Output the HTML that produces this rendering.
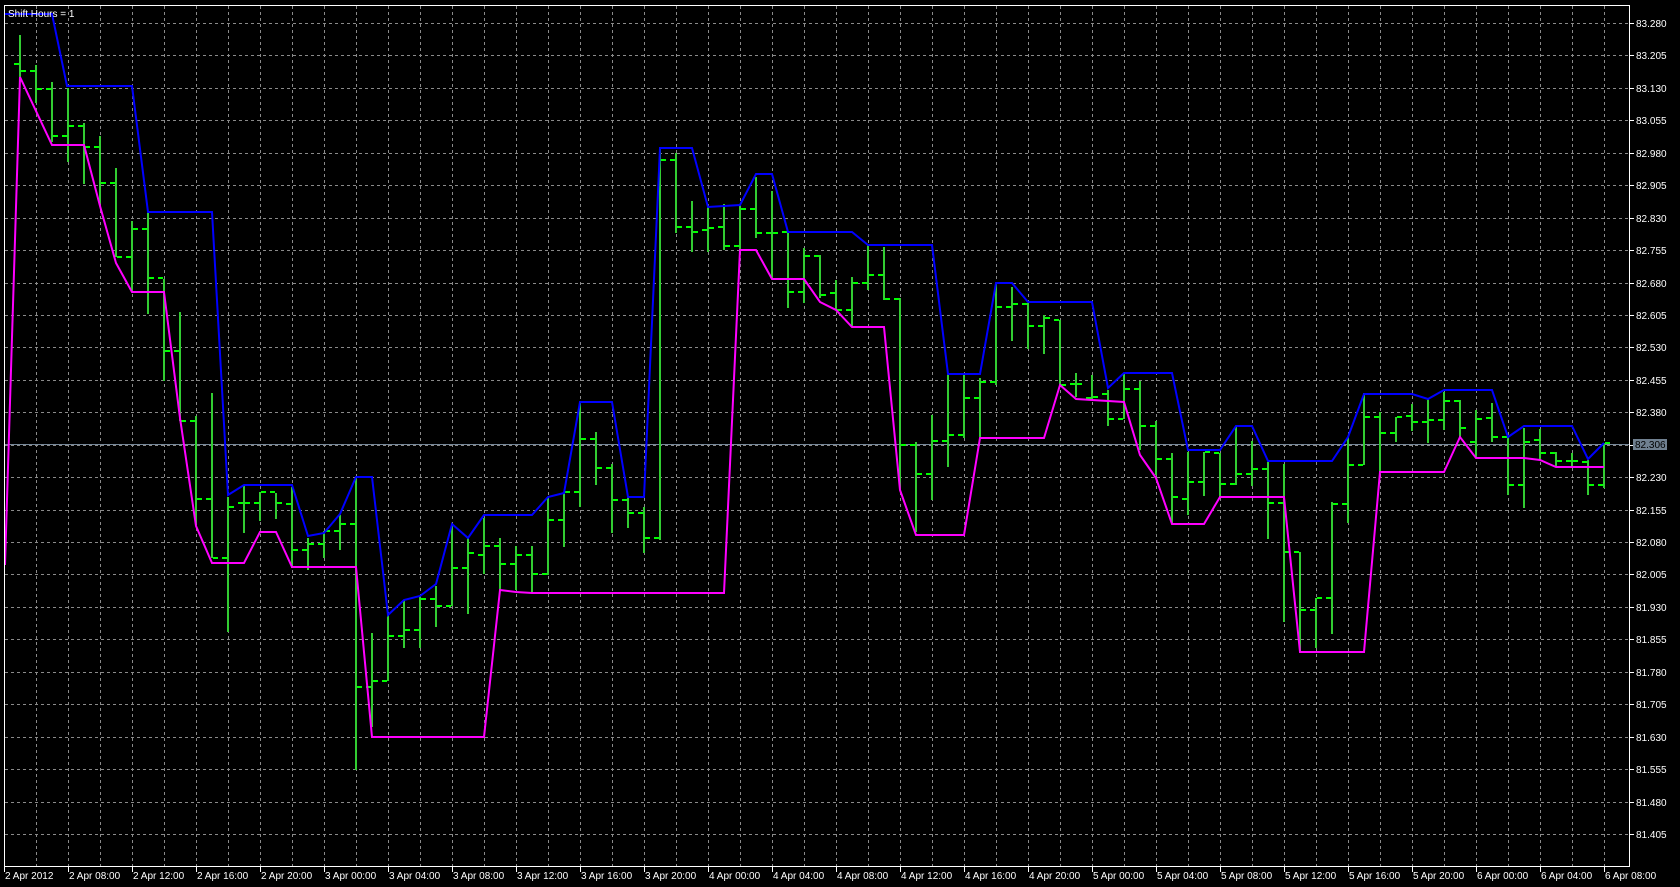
<!DOCTYPE html>
<html><head><meta charset="utf-8">
<style>
html,body{margin:0;padding:0;background:#000;}
body{width:1680px;height:887px;overflow:hidden;position:relative;font-family:"Liberation Sans",sans-serif;}
svg{position:absolute;left:0;top:0;}
svg text{font-family:"Liberation Sans",sans-serif;font-size:10px;fill:#fff;}
</style></head><body>
<svg id="c" width="1680" height="887" viewBox="0 0 1680 887" xmlns="http://www.w3.org/2000/svg">
<rect x="0" y="0" width="1680" height="887" fill="#000"/>
<g id="grid" stroke="#8a8a8a" stroke-width="1" stroke-dasharray="3,3" shape-rendering="crispEdges"></g>
<line x1="4" y1="444.5" x2="1630" y2="444.5" stroke="#778899" stroke-width="1" shape-rendering="crispEdges"/>
<g id="bars" shape-rendering="crispEdges"></g>
<polyline id="blue" fill="none" stroke="#0000ff" stroke-width="2" stroke-linejoin="miter"/>
<polyline id="mag" fill="none" stroke="#ff00ff" stroke-width="2"/>
<rect x="4.5" y="5.5" width="1625" height="861" fill="none" stroke="#fff" stroke-width="1" shape-rendering="crispEdges"/>
<g id="ticks" stroke="#fff" stroke-width="1" shape-rendering="crispEdges"></g>
<text x="8" y="17" font-size="10">Shift Hours = 1</text>
<g id="plabels">
<text x="1636" y="27">83.280</text>
<text x="1636" y="59">83.205</text>
<text x="1636" y="92">83.130</text>
<text x="1636" y="124">83.055</text>
<text x="1636" y="157">82.980</text>
<text x="1636" y="189">82.905</text>
<text x="1636" y="222">82.830</text>
<text x="1636" y="254">82.755</text>
<text x="1636" y="287">82.680</text>
<text x="1636" y="319">82.605</text>
<text x="1636" y="351">82.530</text>
<text x="1636" y="384">82.455</text>
<text x="1636" y="416">82.380</text>
<text x="1636" y="481">82.230</text>
<text x="1636" y="514">82.155</text>
<text x="1636" y="546">82.080</text>
<text x="1636" y="578">82.005</text>
<text x="1636" y="611">81.930</text>
<text x="1636" y="643">81.855</text>
<text x="1636" y="676">81.780</text>
<text x="1636" y="708">81.705</text>
<text x="1636" y="741">81.630</text>
<text x="1636" y="773">81.555</text>
<text x="1636" y="806">81.480</text>
<text x="1636" y="838">81.405</text>
</g>
<rect x="1633" y="439" width="34" height="11" fill="#708090"/>
<text x="1635" y="448" style="fill:#000">82.306</text>
<g id="tlabels">
<text x="5" y="879">2 Apr 2012</text>
<text x="69" y="879">2 Apr 08:00</text>
<text x="133" y="879">2 Apr 12:00</text>
<text x="197" y="879">2 Apr 16:00</text>
<text x="261" y="879">2 Apr 20:00</text>
<text x="325" y="879">3 Apr 00:00</text>
<text x="389" y="879">3 Apr 04:00</text>
<text x="453" y="879">3 Apr 08:00</text>
<text x="517" y="879">3 Apr 12:00</text>
<text x="581" y="879">3 Apr 16:00</text>
<text x="645" y="879">3 Apr 20:00</text>
<text x="709" y="879">4 Apr 00:00</text>
<text x="773" y="879">4 Apr 04:00</text>
<text x="837" y="879">4 Apr 08:00</text>
<text x="901" y="879">4 Apr 12:00</text>
<text x="965" y="879">4 Apr 16:00</text>
<text x="1029" y="879">4 Apr 20:00</text>
<text x="1093" y="879">5 Apr 00:00</text>
<text x="1157" y="879">5 Apr 04:00</text>
<text x="1221" y="879">5 Apr 08:00</text>
<text x="1285" y="879">5 Apr 12:00</text>
<text x="1349" y="879">5 Apr 16:00</text>
<text x="1413" y="879">5 Apr 20:00</text>
<text x="1477" y="879">6 Apr 00:00</text>
<text x="1541" y="879">6 Apr 04:00</text>
<text x="1605" y="879">6 Apr 08:00</text>
</g>
</svg>
<script>
(function(){
var NS="http://www.w3.org/2000/svg";
function el(p,n,a){var e=document.createElementNS(NS,n);for(var k in a)e.setAttribute(k,a[k]);p.appendChild(e);return e;}
var g=document.getElementById('grid'),t=document.getElementById('ticks');
for(var k=0;k<=25;k++){var y=Math.round(23+32.44*k)+0.5;el(g,'line',{x1:5,y1:y,x2:1629,y2:y});if(k!=12||true)el(t,'line',{x1:1630,y1:y,x2:1634,y2:y});}
for(var x=36;x<1630;x+=32){el(g,'line',{x1:x+0.5,y1:6,x2:x+0.5,y2:866});}
for(var j=0;j<=25;j++){var x=4+64*j+0.5;el(t,'line',{x1:x,y1:866,x2:x,y2:872});}
var B=[
[35,77,64,71],[65,103,71,89],[82,142,89,136],[88,162,136,126],[123,184,126,147],[136,204,147,183],[168,257,183,257],[221,291,257,229],[213,314,229,278],[279,381,278,351],
[312,421,351,421],[416,524,421,499],[393,558,499,558],[497,632,558,507],[486,533,503,503],[492,521,503,492],[493,519,492,503],[487,568,504,550],[538,570,550,544],[531,558,544,531],
[515,550,531,524],[478,770,524,687],[633,727,687,681],[615,681,681,636],[600,648,636,630],[596,648,630,599],[586,627,599,606],[525,606,606,568],[538,614,568,553],[518,574,555,546],
[538,590,546,564],[546,590,564,555],[546,592,555,574],[497,575,574,520],[493,547,520,492],[402,507,492,439],[432,485,439,468],[464,533,468,500],[498,528,500,513],[507,553,513,538],
[148,540,538,160],[153,233,160,227],[201,252,227,232],[207,252,230,228],[204,250,227,246],[205,250,246,209],[177,238,209,233],[191,278,233,233],[232,308,232,292],[248,303,292,256],
[255,298,256,295],[280,310,293,310],[277,327,310,283],[245,290,283,275],[247,300,275,299],[298,490,299,445],[442,532,445,474],[415,500,474,441],[374,467,441,435],[374,438,435,398],
[378,437,398,382],[283,385,382,307],[287,341,307,304],[303,349,304,326],[315,354,326,318],[320,387,320,385],[373,397,384,384],[375,400,398,397],[390,426,394,419],[373,419,419,389],
[381,450,389,426],[421,475,426,459],[453,523,459,497],[452,515,499,482],[452,496,482,452],[453,497,453,484],[427,485,484,474],[441,486,474,469],[462,539,469,503],[464,622,503,552],
[552,652,552,610],[598,648,610,598],[502,634,598,504],[437,523,504,465],[393,465,465,417],[412,472,417,433],[417,442,433,417],[404,431,416,422],[399,443,422,420],[392,430,420,401],
[400,438,401,428],[410,457,442,419],[403,442,418,437],[437,495,437,485],[428,508,485,442],[429,460,440,453],[452,466,453,461],[453,466,461,461],[460,495,462,485],[443,488,485,443]];
var bg=document.getElementById('bars');
for(var i=0;i<B.length;i++){var x=4+16*(i+1),b=B[i];
el(bg,'rect',{x:x-1,y:b[0],width:2,height:Math.max(2,b[1]-b[0]),fill:'#32cd32'});
el(bg,'rect',{x:x-6,y:b[2]-1,width:5,height:2,fill:'#00ff00'});
el(bg,'rect',{x:x+1,y:b[3]-1,width:5,height:2,fill:'#00ff00'});}
var blue=[[5,14],[52,14],[67,86],[132,86],[148,212],[212,212],[228,495],[244,485],[292,485],[308,536],[324,533],[340,514],[356,477],[372,477],[388,615],[404,600],[420,596],[436,584],[452,524],[468,538],[484,515],[532,515],[548,497],[564,493],[580,402],[612,402],[628,497],[644,497],[660,148],[692,148],[708,207],[740,205],[756,174],[772,174],[788,232],[852,232],[868,245],[932,245],[948,374],[980,374],[996,283],[1012,283],[1028,302],[1092,302],[1108,388],[1124,373],[1172,373],[1188,450],[1220,450],[1236,426],[1252,426],[1268,461],[1332,461],[1348,437],[1364,394],[1412,394],[1428,399],[1444,390],[1492,390],[1508,437],[1524,426],[1572,426],[1588,459],[1604,443]];
var mag=[[5,565],[20,77],[52,145],[84,145],[100,206],[116,263],[132,292],[164,292],[180,418],[196,526],[212,563],[244,563],[260,532],[276,532],[292,567],[356,567],[372,737],[484,737],[500,590],[516,592],[532,593],[724,593],[740,250],[756,250],[772,279],[804,279],[820,302],[836,310],[852,327],[884,327],[900,490],[916,535],[964,535],[980,438],[1044,438],[1060,385],[1076,399],[1124,402],[1140,455],[1156,478],[1172,524],[1204,524],[1220,497],[1284,497],[1300,652],[1364,652],[1380,472],[1444,472],[1460,437],[1476,458],[1524,458],[1540,460],[1556,467],[1604,467]];
function pts(a){return a.map(function(p){return p[0]+','+p[1];}).join(' ');}
document.getElementById('blue').setAttribute('points',pts(blue));
document.getElementById('mag').setAttribute('points',pts(mag));
})();
</script>
</body></html>
